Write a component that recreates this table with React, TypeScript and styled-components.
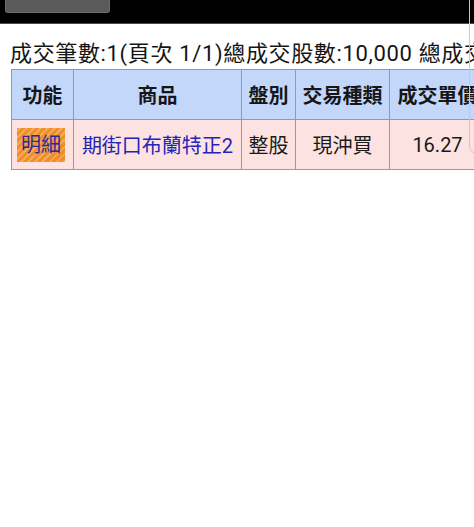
import React from "react";
import styled, { createGlobalStyle } from "styled-components";

const Global = createGlobalStyle`
  html, body {
    margin: 0;
    padding: 0;
    background: #ffffff;
    overflow: hidden;
  }
  body {
    font-family: Roboto, "Noto Sans CJK TC", "Noto Sans", sans-serif;
    color: #111;
  }
`;

const Page = styled.div`
  position: relative;
  width: 474px;
  height: 527px;
  overflow: hidden;
  background: #fff;
`;

const TopBar = styled.div`
  height: 23px;
  background: #000;
  border-bottom: 1px solid #4a4a4a;
  padding-left: 5px;
`;

const Tab = styled.div`
  width: 105px;
  height: 13px;
  background: #5a5a5a;
  border-radius: 0 0 3px 3px;
  border: 1px solid #6a6a6a;
  border-top: none;
  box-sizing: border-box;
`;

const Content = styled.div`
  padding: 16px 0 0 11px;
`;

const Summary = styled.div`
  font-size: 22px;
  letter-spacing: 0.65px;
  line-height: 28px;
  white-space: nowrap;
  margin-bottom: 1px;
  margin-left: -1px;
  color: #151515;
`;

const Table = styled.table`
  border-collapse: collapse;
  table-layout: fixed;
  width: 474px;
  font-size: 20px;
`;

const HeadCell = styled.th<{ $w: number }>`
  width: ${(p) => p.$w}px;
  height: 49px;
  padding: 0;
  background: #c3d7fa;
  border: 1px solid #9a9a9a;
  font-weight: 700;
  text-align: center;
  white-space: nowrap;
  color: #161616;
`;

const Cell = styled.td`
  height: 49px;
  padding: 0;
  background: #fde2e2;
  border: 1px solid #9a9a9a;
  text-align: center;
  white-space: nowrap;
  color: #1a1a1a;
`;

const DetailButton = styled.span`
  display: inline-block;
  width: 48px;
  height: 34px;
  line-height: 34px;
  margin-left: -3px;
  text-align: center;
  color: #2a2a9c;
  background: repeating-linear-gradient(
      -45deg,
      rgba(255, 200, 120, 0.5) 0 2px,
      rgba(255, 200, 120, 0) 2px 5px
    ),
    #ee8f2c;
  font-size: 20px;
`;

const ProductLink = styled.span`
  color: #2424b8;
`;

const ScrollEdge = styled.div`
  position: absolute;
  left: 469px;
  top: -8px;
  width: 30px;
  height: 162px;
  border: 1px solid #c8c8c8;
  border-radius: 8px;
  box-sizing: border-box;
  pointer-events: none;
`;

export default function App() {
  return (
    <Page>
      <Global />
      <TopBar>
        <Tab />
      </TopBar>
      <Content>
        <Summary>成交筆數:1(頁次 1/1)總成交股數:10,000 總成交金額</Summary>
        <Table>
          <thead>
            <tr>
              <HeadCell $w={61}>功能</HeadCell>
              <HeadCell $w={167}>商品</HeadCell>
              <HeadCell $w={53}>盤別</HeadCell>
              <HeadCell $w={93}>交易種類</HeadCell>
              <HeadCell $w={95}>成交單價</HeadCell>
            </tr>
          </thead>
          <tbody>
            <tr>
              <Cell>
                <DetailButton>明細</DetailButton>
              </Cell>
              <Cell>
                <ProductLink>期街口布蘭特正2</ProductLink>
              </Cell>
              <Cell>整股</Cell>
              <Cell>現沖買</Cell>
              <Cell>16.27</Cell>
            </tr>
          </tbody>
        </Table>
      </Content>
      <ScrollEdge />
    </Page>
  );
}
